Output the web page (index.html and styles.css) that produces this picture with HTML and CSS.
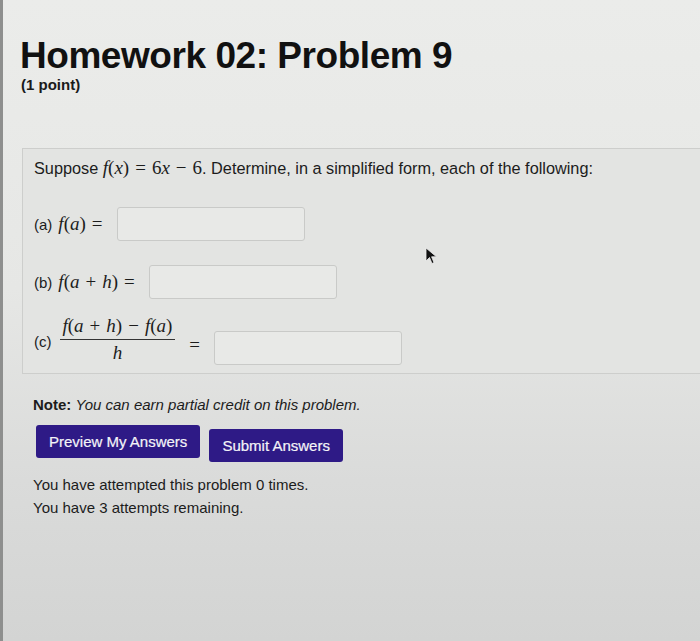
FILE: index.html
```html
<!DOCTYPE html>
<html>
<head>
<meta charset="utf-8">
<link rel="stylesheet" href="styles.css">
</head>
<body>
<div class="page">
  <h1 class="title">Homework 02: Problem 9</h1>
  <div class="points">(1 point)</div>

  <div class="problem">
    <p class="intro">Suppose <span class="m"><i>f</i>(<i>x</i>)<span class="op">=</span>6<i>x</i><span class="op">−</span>6</span>. Determine, in a simplified form, each of the following:</p>

    <div class="row row-a">
      <span class="lbl">(a)</span>
      <span class="m"><i>f</i>(<i>a</i>)<span class="op">=</span></span>
      <span class="answer"></span>
    </div>

    <div class="row row-b">
      <span class="lbl">(b)</span>
      <span class="m"><i>f</i>(<i>a</i><span class="op">+</span><i>h</i>)<span class="op">=</span></span>
      <span class="answer"></span>
    </div>

    <div class="row row-c">
      <span class="lbl">(c)</span>
      <span class="frac m">
        <span class="num"><i>f</i>(<i>a</i><span class="op">+</span><i>h</i>)<span class="op">−</span><i>f</i>(<i>a</i>)</span>
        <span class="den"><i>h</i></span>
      </span>
      <span class="m eq">=</span>
      <span class="answer"></span>
    </div>
  </div>

  <p class="note"><b>Note:</b> <em>You can earn partial credit on this problem.</em></p>

  <div class="buttons">
    <span class="btn btn-preview">Preview My Answers</span>
    <span class="btn btn-submit">Submit Answers</span>
  </div>

  <div class="attempts">
    <div>You have attempted this problem 0 times.</div>
    <div>You have 3 attempts remaining.</div>
  </div>
</div>

<svg class="cursor" width="14" height="18" viewBox="0 0 14 18">
  <path d="M1 1 L1 14 L4.5 10.5 L7 16.5 L9 15.6 L6.6 9.8 L11.5 9.8 Z" fill="#111" stroke="#eee" stroke-width="0.8"/>
</svg>
</body>
</html>
```

FILE: styles.css
```css
html, body {
  margin: 0;
  padding: 0;
}

body {
  width: 700px;
  height: 641px;
  overflow: hidden;
  position: relative;
  font-family: "Liberation Sans", Arial, Helvetica, sans-serif;
  color: #1c1c1c;
  background: linear-gradient(180deg, #ebecea 0%, #e6e7e5 45%, #dadbda 75%, #d3d4d3 100%);
  border-left: 3px solid #8e8f8e;
  box-sizing: border-box;
}

.page {
  padding-top: 36px;
}

.title {
  margin: 0 0 0 17px;
  font-size: 37px;
  font-weight: bold;
  line-height: 40px;
  color: #111;
  letter-spacing: -0.45px;
}

.points {
  margin: 0 0 0 18px;
  font-size: 15px;
  line-height: 17px;
  font-weight: bold;
  color: #1a1a1a;
}

.problem {
  margin: 55px 0 0 19px;
  height: 226px;
  padding: 8px 0 0 11px;
  box-sizing: border-box;
  background: #e3e4e2;
  border: 1px solid #cdcecc;
  border-right: none;
}

.intro {
  margin: 0;
  font-size: 16.3px;
  line-height: 22px;
}

.m {
  font-family: "Liberation Serif", "Times New Roman", serif;
  font-size: 19px;
}

.m i {
  font-style: italic;
}

.op {
  margin: 0 6px;
}

.row {
  display: flex;
  align-items: center;
  font-size: 15px;
}

.lbl {
  margin-right: 6px;
}

.answer {
  display: inline-block;
  width: 186px;
  height: 32px;
  margin-left: 8px;
  background: #e8e9e7;
  border: 1px solid #c9cac8;
  border-radius: 3px;
}

.row-a {
  margin-top: 28px;
}

.row-b {
  margin-top: 24px;
}

.row-c {
  margin-top: 17px;
}

.frac {
  display: inline-flex;
  flex-direction: column;
  align-items: center;
  margin-left: 2px;
}

.num {
  padding: 0 3px 3px;
  border-bottom: 1px solid #333;
  line-height: 20px;
}

.den {
  line-height: 26px;
}

.eq {
  margin-left: 14px;
  margin-top: 8px;
}

.row-c .answer {
  margin-left: 14px;
  margin-top: 14px;
}

.note {
  margin: 22px 0 0 30px;
  font-size: 15px;
}

.note b {
  font-weight: bold;
}

.buttons {
  display: flex;
  gap: 9px;
  margin: 12px 0 0 33px;
}

.btn {
  display: inline-block;
  height: 33px;
  line-height: 33px;
  padding: 0 13px;
  background: #2e1a86;
  color: #f4f4f8;
  font-size: 15px;
  border-radius: 3px;
  font-weight: 500;
  -webkit-text-stroke: 0.2px #f4f4f8;
}

.btn-submit {
  margin-top: 4px;
}

.attempts {
  margin: 11px 0 0 30px;
  font-size: 15px;
  line-height: 23px;
}

.cursor {
  position: absolute;
  left: 422px;
  top: 247px;
}
```
